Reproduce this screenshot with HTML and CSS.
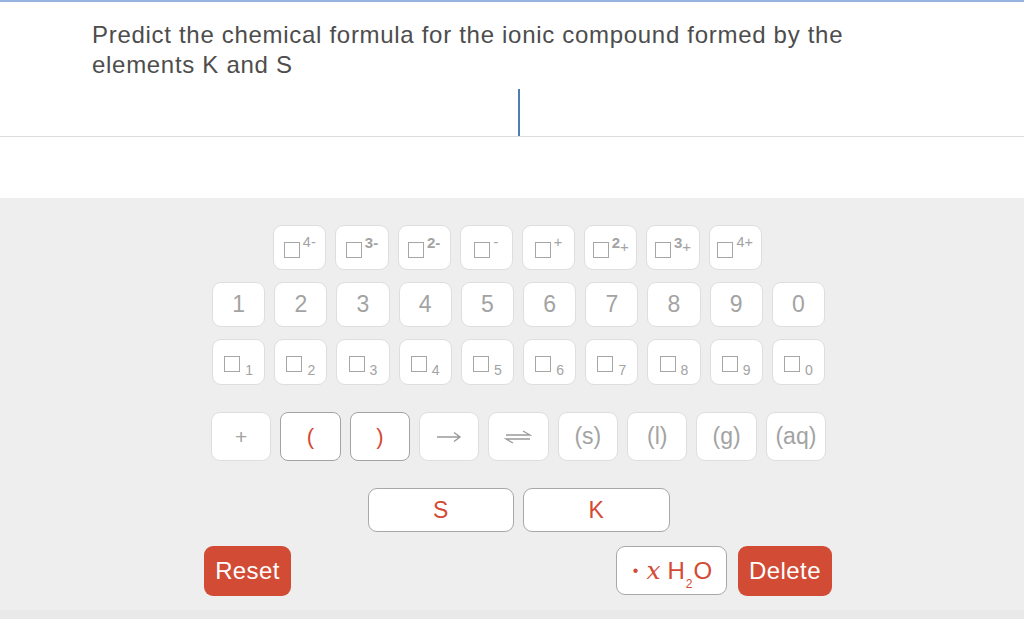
FILE: index.html
```html
<!DOCTYPE html>
<html lang="en">
<head>
<meta charset="utf-8">
<title>Predict the chemical formula</title>
<link rel="stylesheet" href="styles.css">
</head>
<body>
<div class="top-rule"></div>
<section class="question">
  <p class="prompt">Predict the chemical formula for the ionic compound formed by the elements K and S</p>
  <div class="answer"><span class="cursor"></span></div>
</section>
<div class="spacer"></div>
<section class="keypad">
  <div class="grid10 charges">
    <button class="key c2"><span class="box"></span><sup class="sup light">4-</sup></button>
    <button class="key"><span class="box"></span><sup class="sup bold">3-</sup></button>
    <button class="key"><span class="box"></span><sup class="sup bold">2-</sup></button>
    <button class="key"><span class="box"></span><sup class="sup light">-</sup></button>
    <button class="key"><span class="box"></span><sup class="sup light">+</sup></button>
    <button class="key"><span class="box"></span><sup class="sup bold">2<span class="sign">+</span></sup></button>
    <button class="key"><span class="box"></span><sup class="sup bold">3<span class="sign">+</span></sup></button>
    <button class="key"><span class="box"></span><sup class="sup light">4+</sup></button>
  </div>
  <div class="grid10 digits">
    <button class="key num">1</button>
    <button class="key num">2</button>
    <button class="key num">3</button>
    <button class="key num">4</button>
    <button class="key num">5</button>
    <button class="key num">6</button>
    <button class="key num">7</button>
    <button class="key num">8</button>
    <button class="key num">9</button>
    <button class="key num">0</button>
  </div>
  <div class="grid10 subs">
    <button class="key"><span class="box"></span><sub class="sub">1</sub></button>
    <button class="key"><span class="box"></span><sub class="sub">2</sub></button>
    <button class="key"><span class="box"></span><sub class="sub">3</sub></button>
    <button class="key"><span class="box"></span><sub class="sub">4</sub></button>
    <button class="key"><span class="box"></span><sub class="sub">5</sub></button>
    <button class="key"><span class="box"></span><sub class="sub">6</sub></button>
    <button class="key"><span class="box"></span><sub class="sub">7</sub></button>
    <button class="key"><span class="box"></span><sub class="sub">8</sub></button>
    <button class="key"><span class="box"></span><sub class="sub">9</sub></button>
    <button class="key"><span class="box"></span><sub class="sub">0</sub></button>
  </div>
  <div class="grid9 symbols">
    <button class="key tall sym">+</button>
    <button class="key tall paren">(</button>
    <button class="key tall paren">)</button>
    <button class="key tall"><svg width="26" height="12" viewBox="0 0 26 12"><path d="M1 6H24M18 1.5L24 6L18 10.5" fill="none" stroke="#9a9a9a" stroke-width="1.4"/></svg></button>
    <button class="key tall"><svg width="28" height="14" viewBox="0 0 28 14"><path d="M2 5H26L19 1M26 9H2L9 13" fill="none" stroke="#9a9a9a" stroke-width="1.3"/></svg></button>
    <button class="key tall num">(s)</button>
    <button class="key tall num">(l)</button>
    <button class="key tall num">(g)</button>
    <button class="key tall num">(aq)</button>
  </div>
  <div class="elements">
    <button class="element">S</button>
    <button class="element">K</button>
  </div>
  <div class="actions">
    <button class="action reset">Reset</button>
    <div class="right">
      <button class="hydrate"><span class="dot">•</span><span class="mathx">x</span><span class="h2o">H<sub class="two">2</sub>O</span></button>
      <button class="action delete">Delete</button>
    </div>
  </div>
</section>
</body>
</html>
```
FILE: styles.css
```css
* { box-sizing: border-box; }
html, body { margin: 0; padding: 0; }
body {
  width: 1024px;
  height: 619px;
  overflow: hidden;
  font-family: "Liberation Sans", Arial, sans-serif;
  background: #ffffff;
}
.top-rule { height: 2px; background: #97b3df; }
.question {
  height: 135px;
  border-bottom: 1px solid #dcdcdc;
  padding: 18px 0 0 92px;
}
.prompt {
  margin: 0;
  width: 800px;
  font-size: 24px;
  letter-spacing: 0.7px;
  line-height: 30px;
  color: #4d4d4d;
}
.answer { padding: 9px 0 0 426px; }
.cursor {
  display: block;
  width: 1.5px;
  height: 47px;
  background: #4f7db5;
}
.spacer { height: 61px; }
.keypad {
  height: 421px;
  background: #eeeeee;
  border-bottom: 9px solid #e9e9e9;
  padding: 27px 0 0 212px;
}
button {
  font-family: "Liberation Sans", Arial, sans-serif;
  margin: 0;
  padding: 0;
  cursor: pointer;
}
.grid10 {
  display: grid;
  grid-template-columns: repeat(10, 1fr);
  column-gap: 9px;
  width: 613px;
}
.key {
  height: 45px;
  background: #ffffff;
  border: 1px solid #dedede;
  border-radius: 9px;
  color: #a3a3a3;
  display: flex;
  align-items: center;
  justify-content: center;
}
.charges { margin-left: -1px; }
.c2 { grid-column-start: 2; }
.digits { margin-top: 12px; }
.subs { margin-top: 12px; height: 46px; }
.subs .key { height: 46px; }
.num { font-size: 23px; }
.box {
  display: inline-block;
  width: 16px;
  height: 16px;
  border: 1.6px solid #a6a6a6;
  margin-top: 4px;
}
.sup {
  font-size: 14.5px;
  line-height: 1;
  margin-left: 3px;
  position: relative;
  top: -5px;
  vertical-align: baseline;
  color: #a3a3a3;
}
.sup.bold { font-weight: bold; font-size: 15px; }
.sup .sign { font-weight: normal; font-size: 15px; position: relative; top: 4px; }
.sub {
  font-size: 14px;
  line-height: 1;
  margin-left: 5px;
  position: relative;
  top: 8px;
  vertical-align: baseline;
  color: #a3a3a3;
}
.grid9 {
  display: grid;
  grid-template-columns: repeat(9, 1fr);
  column-gap: 9.2px;
  width: 615px;
  margin: 27px 0 0 -1px;
}
.tall { height: 49px; }
.sym { font-size: 21px; }
.paren {
  border-color: #a3a3a3;
  color: #d44a33;
  font-size: 22px;
  border-radius: 8px;
}
.elements {
  display: flex;
  justify-content: center;
  gap: 9px;
  width: 613px;
  margin-top: 27px;
}
.element {
  width: 146.5px;
  height: 44px;
  background: #ffffff;
  border: 1px solid #a8a8a8;
  border-radius: 9px;
  color: #d44a33;
  font-size: 23px;
}
.actions {
  display: flex;
  justify-content: space-between;
  align-items: center;
  width: 628px;
  margin: 14px 0 0 -8px;
}
.right { display: flex; gap: 11px; }
.action {
  height: 50px;
  background: #d24b35;
  border: none;
  border-radius: 9px;
  color: #ffffff;
  font-size: 24px;
  letter-spacing: 0.4px;
}
.reset { width: 87px; }
.delete { width: 94px; }
.hydrate {
  width: 111px;
  height: 49px;
  background: #ffffff;
  border: 1px solid #a8a8a8;
  border-radius: 9px;
  color: #d44a33;
  font-size: 24px;
  display: flex;
  align-items: center;
  justify-content: center;
  padding-left: 2px;
}
.dot { font-size: 16px; margin-right: 8px; }
.mathx {
  font-family: "DejaVu Serif", "Liberation Serif", serif;
  font-style: italic;
  font-size: 25px;
  margin-right: 7px;
}
.h2o { white-space: nowrap; }
.two {
  font-size: 12px;
  vertical-align: baseline;
  position: relative;
  top: 9px;
  margin: 0 1px;
}
```
